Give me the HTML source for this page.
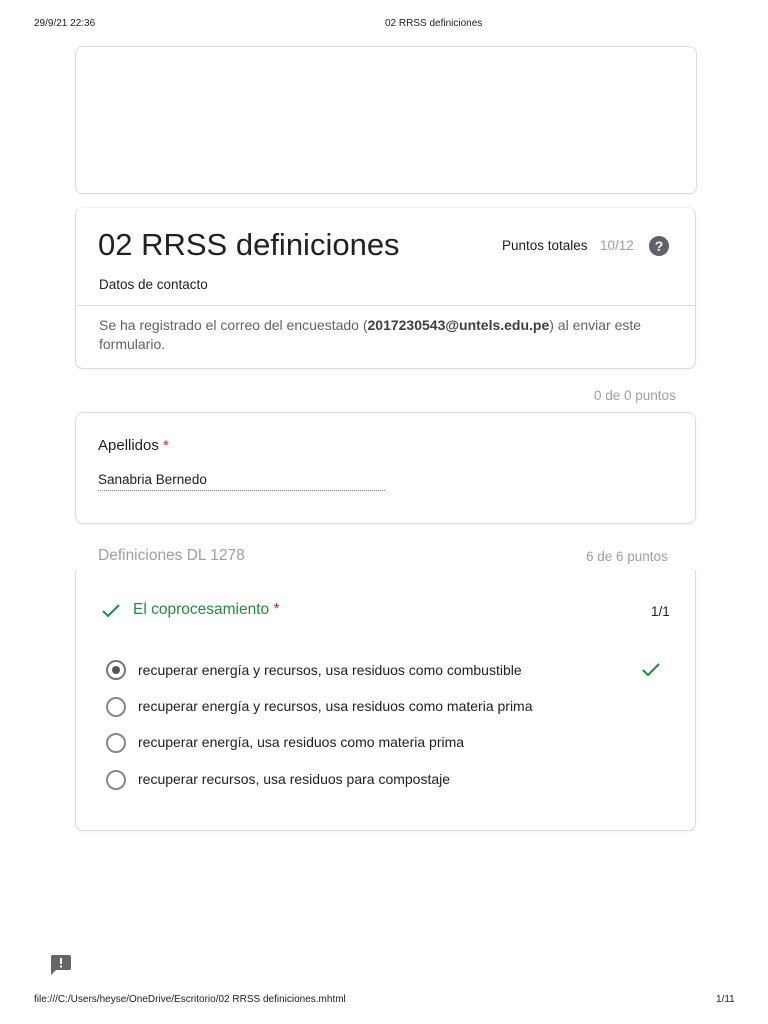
<!DOCTYPE html>
<html><head><meta charset="utf-8"><style>
body{margin:0;width:768px;height:1024px;background:#fff;font-family:"Liberation Sans",Arial,sans-serif;position:relative;overflow:hidden;color:#202124}
.a{position:absolute;white-space:nowrap}
.card{position:absolute;border:1px solid #dadce0;border-radius:8px;background:#fff;box-shadow:0 1px 2px rgba(0,0,0,.06)}
.rad{position:absolute;width:16px;height:16px;border:2px solid #777;border-radius:50%}
</style></head><body>
<div class="a" style="left:34px;top:18px;font-size:10px;color:#222">29/9/21 22:36</div>
<div class="a" style="left:385px;top:18px;font-size:10px;color:#222">02 RRSS definiciones</div>

<div class="card" style="left:75px;top:46px;width:620px;height:146px"></div>

<div class="card" style="left:75px;top:207px;width:619px;height:160px;border-top-color:#f0f0f0"></div>
<div class="a" style="left:98px;top:227px;font-size:31px;color:#202124">02 RRSS definiciones</div>
<div class="a" style="left:502px;top:238px;font-size:13.5px;color:#202124">Puntos totales</div>
<div class="a" style="left:600px;top:238px;font-size:13.5px;color:#9aa0a6">10/12</div>
<div class="a" style="left:649px;top:236px;width:20px;height:20px;border-radius:50%;background:#5f6368;color:#fff;font-size:14px;font-weight:bold;text-align:center;line-height:20px">?</div>
<div class="a" style="left:99px;top:277px;font-size:13.5px">Datos de contacto</div>
<div class="a" style="left:76px;top:305px;width:619px;height:1px;background:#dadce0"></div>
<div class="a" style="left:99px;top:316px;font-size:14px;color:#5f6368;line-height:19px">Se ha registrado el correo del encuestado (<b style="color:#3c4043">2017230543@untels.edu.pe</b>) al enviar este<br>formulario.</div>

<div class="a" style="left:594px;top:388px;font-size:13.5px;color:#9aa0a6">0 de 0 puntos</div>
<div class="card" style="left:75px;top:412px;width:619px;height:110px"></div>
<div class="a" style="left:98px;top:437px;font-size:15px">Apellidos <span style="color:#d93025">*</span></div>
<div class="a" style="left:98px;top:472px;font-size:13.5px">Sanabria Bernedo</div>
<div class="a" style="left:98px;top:490px;width:287px;border-top:1px dotted #888"></div>

<div class="a" style="left:98px;top:547px;font-size:15.5px;color:#9aa0a6">Definiciones DL 1278</div>
<div class="a" style="left:586px;top:549px;font-size:13.5px;color:#9aa0a6">6 de 6 puntos</div>
<div class="card" style="left:75px;top:570px;width:619px;height:260px;border-top:none;border-radius:0 0 8px 8px"></div>
<svg class="a" style="left:101px;top:603px" width="20" height="16" viewBox="0 0 20 16"><path d="M2 8 L7 13 L18 2" fill="none" stroke="#1e8e3e" stroke-width="2"/></svg>
<div class="a" style="left:133px;top:601px;font-size:15.5px;color:#1e8e3e">El coprocesamiento <span style="color:#d93025">*</span></div>
<div class="a" style="left:651px;top:604px;font-size:13.5px">1/1</div>

<div class="rad" style="left:106px;top:660px"></div>
<div class="a" style="left:112px;top:666px;width:8px;height:8px;border-radius:50%;background:#555"></div>
<div class="a" style="left:138px;top:662px;font-size:14px">recuperar energía y recursos, usa residuos como combustible</div>
<svg class="a" style="left:641px;top:662px" width="20" height="16" viewBox="0 0 20 16"><path d="M2 8 L7 13 L18 2" fill="none" stroke="#1e8e3e" stroke-width="2"/></svg>
<div class="rad" style="left:106px;top:697px;border-color:#888"></div>
<div class="a" style="left:138px;top:698px;font-size:14px">recuperar energía y recursos, usa residuos como materia prima</div>
<div class="rad" style="left:106px;top:733px;border-color:#888"></div>
<div class="a" style="left:138px;top:734px;font-size:14px">recuperar energía, usa residuos como materia prima</div>
<div class="rad" style="left:106px;top:770px;border-color:#888"></div>
<div class="a" style="left:138px;top:771px;font-size:14px">recuperar recursos, usa residuos para compostaje</div>

<svg class="a" style="left:50px;top:954px" width="22" height="22" viewBox="0 0 22 22"><path d="M3 1 H19 Q21 1 21 3 V14 Q21 16 19 16 H6 L1 21 V3 Q1 1 3 1Z" fill="#666"/><rect x="10" y="4" width="2" height="6" fill="#fff"/><rect x="10" y="11.5" width="2" height="2" fill="#fff"/></svg>
<div class="a" style="left:34px;top:994px;font-size:10px;color:#222">file:///C:/Users/heyse/OneDrive/Escritorio/02 RRSS definiciones.mhtml</div>
<div class="a" style="left:716px;top:994px;font-size:10px;color:#222">1/11</div>
</body></html>
